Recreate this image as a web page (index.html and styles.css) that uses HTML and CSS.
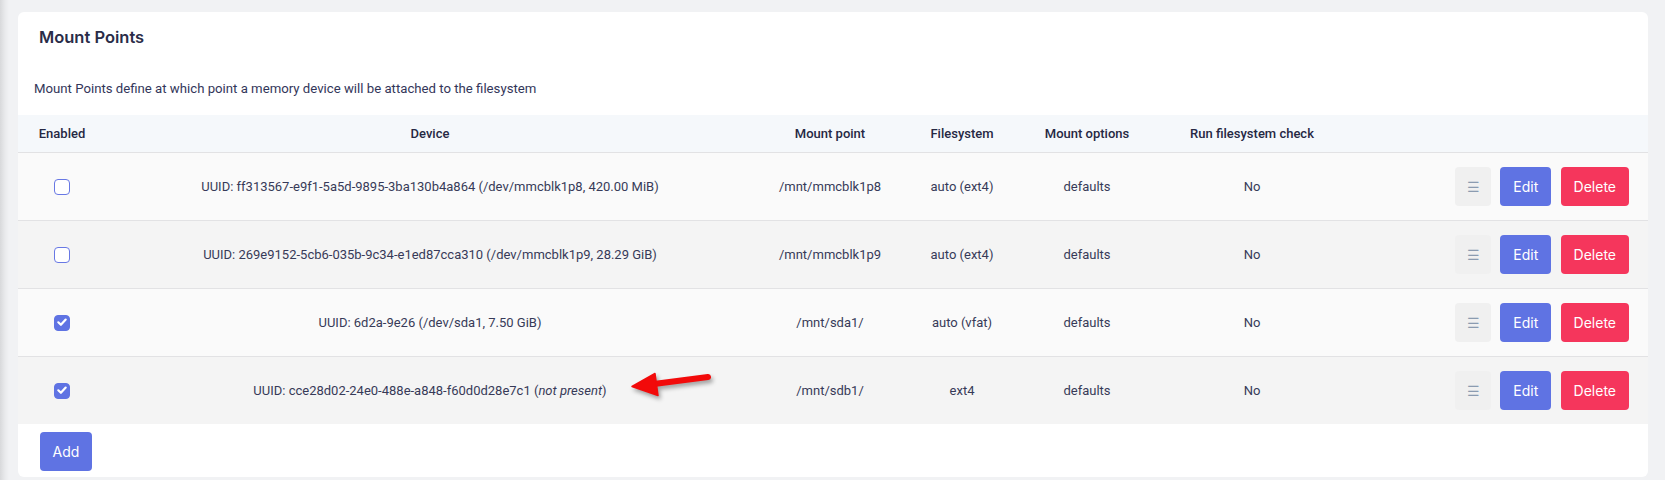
FILE: index.html
```html
<!DOCTYPE html>
<html lang="en">
<head>
  <meta charset="UTF-8">
  <meta name="viewport" content="width=device-width, initial-scale=1.0">
  <title>Mount Points</title>
  <link rel="stylesheet" href="styles.css">
</head>
<body>
  <div class="card">
    <div class="card-header">
      <h3 class="card-title">Mount Points</h3>
    </div>
    <p class="card-desc">Mount Points define at which point a memory device will be attached to the filesystem</p>

    <table class="mounts">
      <colgroup>
        <col class="c-enabled">
        <col class="c-device">
        <col class="c-point">
        <col class="c-fs">
        <col class="c-opts">
        <col class="c-check">
        <col class="c-actions">
      </colgroup>
      <thead>
        <tr>
          <th>Enabled</th>
          <th>Device</th>
          <th>Mount point</th>
          <th>Filesystem</th>
          <th>Mount options</th>
          <th>Run filesystem check</th>
          <th></th>
        </tr>
      </thead>
      <tbody>
        <tr>
          <td><span class="check"></span></td>
          <td>UUID: ff313567-e9f1-5a5d-9895-3ba130b4a864 (/dev/mmcblk1p8, 420.00 MiB)</td>
          <td>/mnt/mmcblk1p8</td>
          <td>auto (ext4)</td>
          <td>defaults</td>
          <td>No</td>
          <td class="actions">
            <button class="btn btn-handle">&#9776;</button>
            <button class="btn btn-edit">Edit</button>
            <button class="btn btn-delete">Delete</button>
          </td>
        </tr>
        <tr>
          <td><span class="check"></span></td>
          <td>UUID: 269e9152-5cb6-035b-9c34-e1ed87cca310 (/dev/mmcblk1p9, 28.29 GiB)</td>
          <td>/mnt/mmcblk1p9</td>
          <td>auto (ext4)</td>
          <td>defaults</td>
          <td>No</td>
          <td class="actions">
            <button class="btn btn-handle">&#9776;</button>
            <button class="btn btn-edit">Edit</button>
            <button class="btn btn-delete">Delete</button>
          </td>
        </tr>
        <tr>
          <td><span class="check checked"><svg viewBox="0 0 16 16" width="16" height="16"><path d="M4.3 8.3l2.6 2.5 4.8-5.2" fill="none" stroke="#fff" stroke-width="2.2" stroke-linecap="round" stroke-linejoin="round"/></svg></span></td>
          <td>UUID: 6d2a-9e26 (/dev/sda1, 7.50 GiB)</td>
          <td>/mnt/sda1/</td>
          <td>auto (vfat)</td>
          <td>defaults</td>
          <td>No</td>
          <td class="actions">
            <button class="btn btn-handle">&#9776;</button>
            <button class="btn btn-edit">Edit</button>
            <button class="btn btn-delete">Delete</button>
          </td>
        </tr>
        <tr>
          <td><span class="check checked"><svg viewBox="0 0 16 16" width="16" height="16"><path d="M4.3 8.3l2.6 2.5 4.8-5.2" fill="none" stroke="#fff" stroke-width="2.2" stroke-linecap="round" stroke-linejoin="round"/></svg></span></td>
          <td>UUID: cce28d02-24e0-488e-a848-f60d0d28e7c1 (<em>not present</em>)</td>
          <td>/mnt/sdb1/</td>
          <td>ext4</td>
          <td>defaults</td>
          <td>No</td>
          <td class="actions">
            <button class="btn btn-handle">&#9776;</button>
            <button class="btn btn-edit">Edit</button>
            <button class="btn btn-delete">Delete</button>
          </td>
        </tr>
      </tbody>
    </table>

    <div class="card-footer">
      <button class="btn btn-edit btn-add">Add</button>
    </div>

    <!-- annotation arrow pointing at the missing device -->
    <svg class="arrow" viewBox="0 0 100 32" width="100" height="32">
      <line x1="22" y1="14.5" x2="80" y2="7" stroke="#f20a0a" stroke-width="6" stroke-linecap="round"/>
      <polygon points="4,16.5 27,3.5 30,25.5" fill="#f20a0a" stroke="#f20a0a" stroke-width="1.5" stroke-linejoin="round"/>
    </svg>
  </div>
</body>
</html>
```

FILE: styles.css
```css
/* Page */
body {
  margin: 0;
  padding: 12px 17px 3px 18px;
  font-family: 'Roboto', 'Liberation Sans', sans-serif;
  font-size: 13px;
  color: #373a58;
  background: linear-gradient(to right, #d8d9db 0, #e9eaec 5px, #f1f2f4 9px);
}

/* Card */
.card {
  position: relative;
  background: #fff;
  border-radius: 6px;
  height: 465px;
  overflow: hidden;
}
.card-header {
  padding: 14px 20px 0 21px;
}
.card-title {
  margin: 0;
  font-family: 'Inter', sans-serif;
  font-size: 16.5px;
  line-height: 22px;
  font-weight: 600;
  color: #2a2c48;
}
.card-desc {
  margin: 32px 0 17px 16px;
  font-size: 13.2px;
  line-height: 18px;
  color: #33365a;
}

/* Table */
.mounts {
  width: 100%;
  border-collapse: collapse;
  table-layout: fixed;
}
.c-enabled { width: 88px; }
.c-device { width: 648px; }
.c-point { width: 152px; }
.c-fs { width: 112px; }
.c-opts { width: 138px; }
.c-check { width: 192px; }
.c-actions { width: 300px; }

.mounts th {
  height: 37px;
  padding: 0;
  background: #f5f8fb;
  font-weight: 500;
  color: #262843;
  text-align: center;
}
.mounts td {
  height: 67px;
  padding: 0;
  text-align: center;
  border-top: 1px solid #e2e2e4;
  white-space: nowrap;
}
.mounts tbody tr:nth-child(odd) { background: #fafafa; }
.mounts tbody tr:nth-child(even) { background: #f4f4f4; }

.check {
  display: inline-block;
  width: 16px;
  height: 16px;
  box-sizing: border-box;
  border: 1.5px solid #6878e4;
  border-radius: 4px;
  background: #fff;
  vertical-align: middle;
  position: relative;
}
.check.checked {
  background: #5f73e3;
  border-color: #5f73e3;
}
.check svg {
  position: absolute;
  left: -1.5px;
  top: -1.5px;
}

/* Buttons */
.actions {
  text-align: right !important;
  padding-right: 19px !important;
}
.btn {
  height: 39px;
  border: none;
  border-radius: 4px;
  font-family: 'Inter', sans-serif;
  font-size: 14px;
  color: #fff;
  padding: 0 13px;
  margin-left: 6px;
  vertical-align: middle;
  cursor: pointer;
}
.btn-handle {
  width: 36px;
  padding: 0;
  background: #f0f0f0;
  color: #8b9bb0;
  font-size: 14px;
}
.btn-edit { background: #5f73e3; }
.btn-delete { background: #f5365c; }

.card-footer {
  padding: 8px 22px 0;
}
.btn-add {
  margin: 0;
  width: 52px;
  padding: 0;
}

/* Annotation */
.arrow {
  position: absolute;
  left: 610px;
  top: 358px;
  filter: drop-shadow(2px 3px 2px rgba(0, 0, 0, 0.35));
}
```
